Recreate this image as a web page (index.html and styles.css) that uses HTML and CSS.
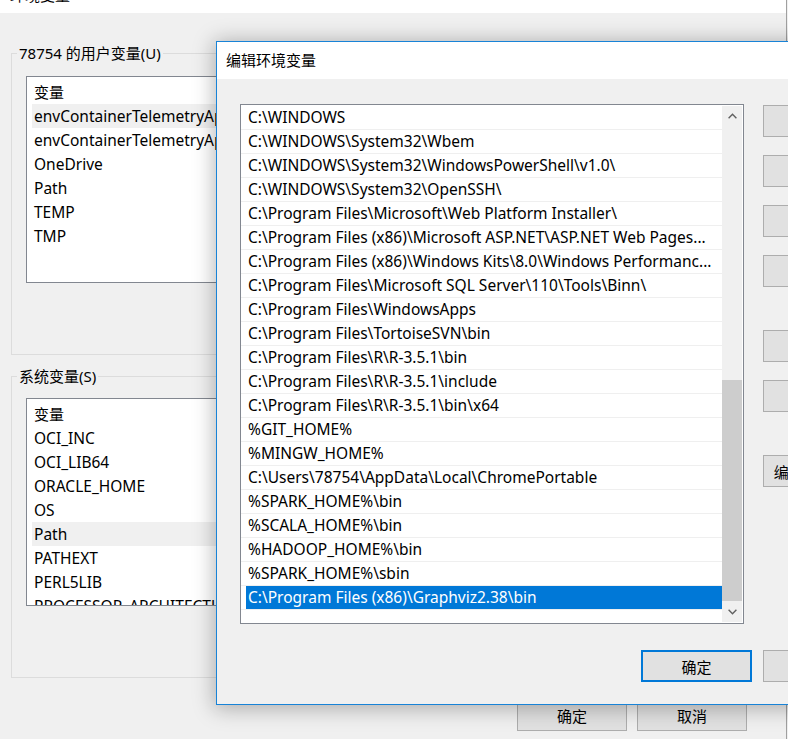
FILE: index.html
```html
<!DOCTYPE html>
<html lang="zh-CN">
<head>
<meta charset="utf-8">
<title>编辑环境变量</title>
<link rel="stylesheet" href="styles.css">
</head>
<body>
<div class="desktop">
  <div class="envwin">
    <div class="envwin-title"><span>环境变量</span></div>
    <div class="envwin-body">
      <fieldset class="group group-user">
        <legend>78754 的用户变量(U)</legend>
        <div class="varlist">
          <div class="varhead">变量</div>
          <div class="varrow hot">envContainerTelemetryApiKey</div>
          <div class="varrow">envContainerTelemetryAppId</div>
          <div class="varrow">OneDrive</div>
          <div class="varrow">Path</div>
          <div class="varrow">TEMP</div>
          <div class="varrow">TMP</div>
        </div>
      </fieldset>
      <fieldset class="group group-sys">
        <legend>系统变量(S)</legend>
        <div class="varlist">
          <div class="varhead">变量</div>
          <div class="varrow">OCI_INC</div>
          <div class="varrow">OCI_LIB64</div>
          <div class="varrow">ORACLE_HOME</div>
          <div class="varrow">OS</div>
          <div class="varrow hot">Path</div>
          <div class="varrow">PATHEXT</div>
          <div class="varrow">PERL5LIB</div>
          <div class="varrow">PROCESSOR_ARCHITECTURE</div>
        </div>
      </fieldset>
      <div class="envwin-footer">
        <button class="btn">确定</button>
        <button class="btn">取消</button>
      </div>
    </div>
  </div>

  <div class="dialog">
    <div class="dlg-title">编辑环境变量</div>
    <div class="dlg-body">
      <div class="dlg-main">
        <div class="pathlist">
          <div class="rows">
            <div class="row"><span>C:\WINDOWS</span></div>
            <div class="row"><span>C:\WINDOWS\System32\Wbem</span></div>
            <div class="row"><span>C:\WINDOWS\System32\WindowsPowerShell\v1.0\</span></div>
            <div class="row"><span>C:\WINDOWS\System32\OpenSSH\</span></div>
            <div class="row"><span>C:\Program Files\Microsoft\Web Platform Installer\</span></div>
            <div class="row"><span>C:\Program Files (x86)\Microsoft ASP.NET\ASP.NET Web Pages...</span></div>
            <div class="row"><span>C:\Program Files (x86)\Windows Kits\8.0\Windows Performanc...</span></div>
            <div class="row"><span>C:\Program Files\Microsoft SQL Server\110\Tools\Binn\</span></div>
            <div class="row"><span>C:\Program Files\WindowsApps</span></div>
            <div class="row"><span>C:\Program Files\TortoiseSVN\bin</span></div>
            <div class="row"><span>C:\Program Files\R\R-3.5.1\bin</span></div>
            <div class="row"><span>C:\Program Files\R\R-3.5.1\include</span></div>
            <div class="row"><span>C:\Program Files\R\R-3.5.1\bin\x64</span></div>
            <div class="row"><span>%GIT_HOME%</span></div>
            <div class="row"><span>%MINGW_HOME%</span></div>
            <div class="row"><span>C:\Users\78754\AppData\Local\ChromePortable</span></div>
            <div class="row"><span>%SPARK_HOME%\bin</span></div>
            <div class="row"><span>%SCALA_HOME%\bin</span></div>
            <div class="row"><span>%HADOOP_HOME%\bin</span></div>
            <div class="row"><span>%SPARK_HOME%\sbin</span></div>
            <div class="row sel"><span>C:\Program Files (x86)\Graphviz2.38\bin</span></div>
          </div>
          <div class="vscroll">
            <div class="arrow up">
              <svg width="9" height="6" viewBox="0 0 9 6"><path d="M0.6 5.2 L4.5 1.3 L8.4 5.2" fill="none" stroke="#606060" stroke-width="1.4"/></svg>
            </div>
            <div class="track"><div class="thumb"></div></div>
            <div class="arrow down">
              <svg width="9" height="6" viewBox="0 0 9 6"><path d="M0.6 0.8 L4.5 4.7 L8.4 0.8" fill="none" stroke="#606060" stroke-width="1.4"/></svg>
            </div>
          </div>
        </div>
        <div class="side">
          <button class="btn">新建(N)</button>
          <button class="btn">编辑(E)</button>
          <button class="btn">浏览(B)...</button>
          <button class="btn">删除(D)</button>
          <button class="btn sep">上移(U)</button>
          <button class="btn">下移(O)</button>
          <button class="btn sep">编辑文本(T)...</button>
        </div>
      </div>
      <div class="dlg-footer">
        <button class="btn default">确定</button>
        <button class="btn">取消</button>
      </div>
    </div>
  </div>
</div>
</body>
</html>
```

FILE: styles.css
```css
* { box-sizing: border-box; }

html, body {
  margin: 0;
  padding: 0;
}

body {
  background: #f0f0f0;
  font-family: "Noto Sans", "Noto Sans CJK SC", sans-serif;
  font-size: 15px;
  color: #000;
  overflow: hidden;
}

.desktop {
  position: relative;
  width: 788px;
  height: 739px;
  overflow: hidden;
}

/* background window: 环境变量 */
.envwin {
  width: 787px;
  height: 739px;
  background: #f0f0f0;
  border-right: 1px solid #a0a0a0;
}

.envwin-title {
  height: 13px;
  background: #fff;
  overflow: hidden;
  padding-left: 10px;
}

.envwin-title span {
  display: block;
  line-height: 20px;
  margin-top: -15px;
}

.envwin-body {
  padding: 30px 0 0 11px;
}

.group {
  margin: 0;
  padding: 13px 0 71px 14px;
  border: 1px solid #dcdcdc;
  width: 770px;
  min-width: 0;
}

.group legend {
  padding: 0 2px;
  margin-left: -9px;
  line-height: 20px;
}

.group-sys {
  margin-top: 11px;
  padding-top: 12px;
}

.varlist {
  width: 740px;
  height: 207px;
  border: 1px solid #828790;
  background: #fff;
  padding-top: 3px;
  overflow: hidden;
}

.group-sys .varlist {
  height: 208px;
}

.varhead,
.varrow {
  height: 24px;
  line-height: 24px;
  margin-left: 5px;
  padding-left: 2px;
  white-space: nowrap;
}

.varrow {
  font-size: 15.5px;
}

.varrow.hot {
  background: #f0f0f0;
}

.envwin-footer {
  display: flex;
  justify-content: flex-end;
  gap: 10px;
  padding-right: 39px;
  margin-top: 21px;
}

.btn {
  height: 32px;
  width: 111px;
  background: #e1e1e1;
  border: 1px solid #adadad;
  font: inherit;
  color: #000;
  padding: 0;
  white-space: nowrap;
  text-align: center;
  flex: none;
}

.envwin-footer .btn {
  width: 110px;
}

/* foreground dialog: 编辑环境变量 */
.dialog {
  position: absolute;
  left: 216px;
  top: 41px;
  width: 682px;
  height: 664px;
  border: 1px solid #1883d7;
  background: #f0f0f0;
  box-shadow: 0 2px 20px 2px rgba(0, 0, 0, 0.28);
  display: flex;
  flex-direction: column;
}

.dlg-title {
  height: 37px;
  background: #fff;
  padding-left: 9px;
  line-height: 37px;
  flex: none;
}

.dlg-body {
  flex: 1;
  padding: 25px 23px 22px;
  display: flex;
  flex-direction: column;
}

.dlg-main {
  display: flex;
  gap: 19px;
}

.pathlist {
  width: 504px;
  height: 520px;
  border: 1px solid #828790;
  background: #fff;
  display: flex;
  flex: none;
}

.rows {
  width: 481px;
  padding-top: 1px;
  overflow: hidden;
}

.row {
  height: 24px;
  border-bottom: 1px solid #efefef;
  padding-left: 5px;
  font-size: 15.5px;
}

.row span {
  display: block;
  height: 23px;
  line-height: 23px;
  padding-left: 2px;
  white-space: nowrap;
  overflow: hidden;
  text-overflow: ellipsis;
}

.row.sel span {
  background: #0078d7;
  color: #fff;
}

.vscroll {
  width: 20px;
  height: 516px;
  margin-top: 1px;
  background: #f0f0f0;
  display: flex;
  flex-direction: column;
}

.arrow {
  height: 20px;
  display: flex;
  align-items: center;
  justify-content: center;
}

.arrow.down {
  height: 21px;
}

.arrow svg {
  display: block;
}

.track {
  flex: 1;
  display: flex;
  flex-direction: column;
}

.thumb {
  margin-top: auto;
  height: 221px;
  background: #cdcdcd;
}

.side {
  display: flex;
  flex-direction: column;
  width: 111px;
  padding-top: 1px;
  flex: none;
}

.side .btn + .btn {
  margin-top: 18px;
}

.side .btn.sep {
  margin-top: 43px;
}

.dlg-footer {
  margin-top: auto;
  display: flex;
  justify-content: flex-end;
  gap: 11px;
}

.btn.default {
  border: 2px solid #0078d7;
}
```
